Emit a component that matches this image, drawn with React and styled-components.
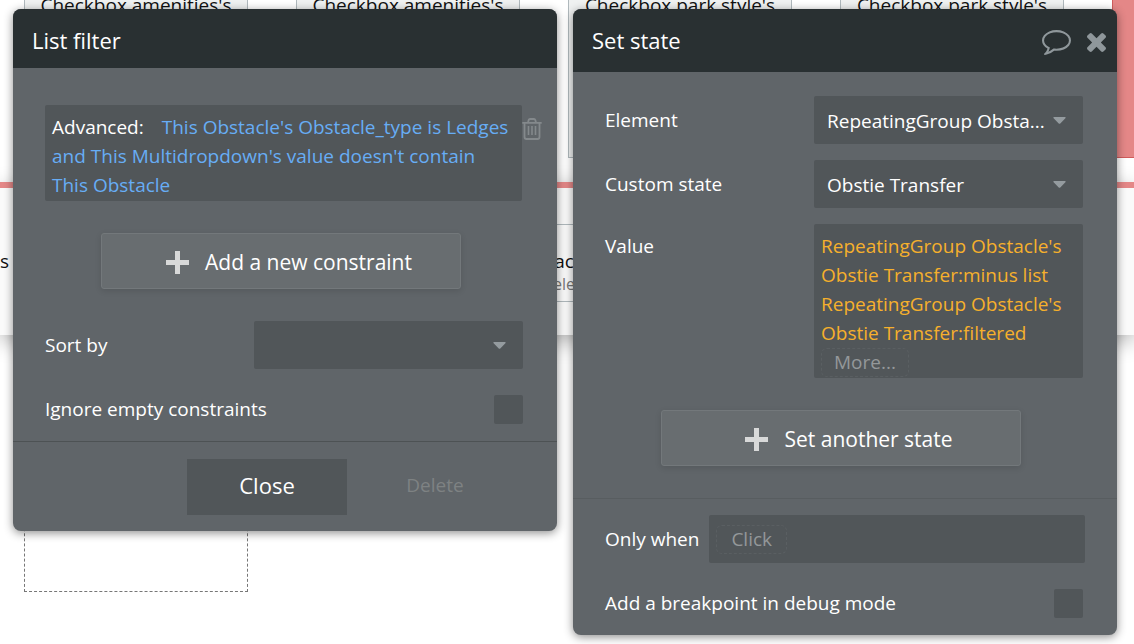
import React from 'react';

import styled, { createGlobalStyle } from 'styled-components';

const GlobalStyle = createGlobalStyle`
  * {
    box-sizing: border-box;
  }
  body {
    margin: 0;
    background-color: #fff;
    font-family: 'Open Sans', 'Noto Sans', sans-serif;
    font-size: 19px;
    line-height: 29px;
    color: #fff;
  }
  button, select, input {
    font: inherit;
    color: inherit;
    margin: 0;
  }
`;

const Page = styled.main`
  position: relative;
  min-height: 100vh;
  overflow: hidden;
`;

/* Workflow canvas behind the windows */
const Canvas = styled.div`
  position: absolute;
  inset: 0;
  overflow: hidden;
  color: #111;
`;

const StepRow = styled.div`
  display: flex;
  gap: 48px;
  height: 158px;
  padding-left: 24px;
`;

const Step = styled.div`
  flex: 0 0 224px;
  border: 1px solid ${(props) => (props.$active ? '#cf5c5c' : '#b0b9bd')};
  border-top: none;
  background-color: ${(props) => (props.$active ? '#e48787' : '#eff1f1')};
  text-align: center;
  line-height: 10px;
  white-space: nowrap;
`;

const EventStrip = styled.div`
  display: flex;
  align-items: flex-start;
  height: 153px;
  margin-top: 24px;
  padding-top: 36px;
  border-top: 6px solid #e48787;
  background-color: #fafafa;
  box-shadow: 0 6px 20px rgba(0, 0, 0, 0.3);
`;

const EventLabel = styled.span`
  flex: 0 0 452px;
  padding-top: 23px;
`;

const EventCard = styled.div`
  width: 224px;
  height: 78px;
  padding-top: 24px;
  border: 1px solid #b0b9bd;
  text-align: center;
  line-height: 24px;
  small {
    display: block;
    font-size: 16px;
    line-height: 22px;
    color: #777;
  }
`;

const DropZone = styled.div`
  width: 224px;
  height: 160px;
  margin: 97px 0 0 24px;
  border: 1px dashed #777;
`;

/* Floating property windows */
const Windows = styled.div`
  position: relative;
  display: flex;
  align-items: flex-start;
  gap: 16px;
  padding: 9px 17px 9px 13px;
`;

const Window = styled.section`
  flex: 1;
  min-width: 0;
  border-radius: 8px;
  background-color: #606569;
  box-shadow: 0 2px 10px rgba(0, 0, 0, 0.45);
  overflow: hidden;
`;

const WindowHeader = styled.header`
  display: flex;
  align-items: center;
  gap: 16px;
  padding: ${(props) => (props.$tall ? '17px 11px 17px 19px' : '17px 19px 13px')};
  background-color: #293032;
  h2 {
    flex: 1;
    margin: 0;
    font-size: 22px;
    font-weight: 400;
    line-height: 29px;
  }
  button {
    padding-top: 4px;
  }
`;

const IconButton = styled.button`
  display: flex;
  padding: 0;
  border: none;
  background: none;
  color: ${(props) => (props.$dim ? '#84898c' : '#8f979b')};
`;

const WindowBody = styled.div`
  display: flex;
  flex-direction: column;
  gap: 16px;
  padding: ${(props) => (props.$list ? '37px 34px 8px 32px' : '24px 34px 32px 32px')};
`;

const Row = styled.div`
  display: flex;
  align-items: ${(props) => (props.$top ? 'flex-start' : 'center')};
  justify-content: space-between;
  gap: 10px;
  min-height: 48px;
  label, h3 {
    margin: 0;
    padding-top: ${(props) => (props.$top ? '8px' : '0')};
    font-size: 19px;
    font-weight: 400;
    white-space: nowrap;
  }
`;

const SelectBox = styled.div`
  display: grid;
  width: 269px;
  align-items: center;
  > * {
    grid-area: 1 / 1;
  }
  svg {
    justify-self: end;
    margin-right: 17px;
    pointer-events: none;
  }
`;

const Select = styled.select`
  width: 100%;
  height: 48px;
  padding: 2px 34px 0 13px;
  border: none;
  border-radius: 2px;
  background-color: #515659;
  appearance: none;
`;

const Checkbox = styled.input`
  width: 29px;
  height: 29px;
  border-radius: 2px;
  background-color: #515659;
  appearance: none;
`;

const Constraint = styled.div`
  display: flex;
  align-items: flex-start;
  margin-right: -19px;
  margin-bottom: 16px;
  button {
    margin-top: 13px;
  }
`;

const Expression = styled.div`
  flex: ${(props) => (props.$value ? '0 0 269px' : '1')};
  padding: 8px 0 1px 7px;
  border-radius: 2px;
  background-color: #515659;
  color: ${(props) => (props.$value ? '#f6b02c' : '#67adf5')};
  white-space: nowrap;
`;

const Keyword = styled.span`
  margin-right: 18px;
  color: #fff;
`;

const Placeholder = styled.button`
  display: block;
  height: 29px;
  padding: 0 ${(props) => (props.$wide ? '14px' : '12px')};
  border: 1px dashed #5a5f62;
  border-radius: 6px;
  background: none;
  color: #94989a;
  line-height: 27px;
`;

const Condition = styled.div`
  flex: 1;
  height: 48px;
  padding: 10px 7px;
  border-radius: 2px;
  background-color: #515659;
`;

const AddButton = styled.button`
  display: flex;
  align-items: center;
  justify-content: center;
  gap: 16px;
  height: 56px;
  margin: ${(props) => (props.$last ? '16px 62px 0 56px' : '0 62px 16px 56px')};
  padding: 2px 0 0 16px;
  border: 1px solid #73787b;
  border-radius: 3px;
  background-color: #686d70;
  box-shadow: 0 2px 6px rgba(0, 0, 0, 0.12);
  font-size: 21px;
`;

const WindowFooter = styled.footer`
  display: flex;
  justify-content: flex-end;
  gap: 8px;
  padding: 17px 42px 16px;
  border-top: 1px solid #4d5254;
`;

const FooterButton = styled.button`
  width: 160px;
  height: 56px;
  padding: 0 0 3px;
  border: none;
  background-color: #515659;
  font-size: 22px;
  &:disabled {
    background: none;
    color: #7e8283;
    font-size: 19px;
  }
`;

const WindowOptions = styled.div`
  display: flex;
  flex-direction: column;
  gap: 16px;
  padding: 16px 32px 8px;
  border-top: 1px solid #585d60;
  input {
    margin-right: 2px;
  }
`;

const Caret = () => (
  <svg width="13" height="7" viewBox="0 0 13 7" aria-hidden="true">
    <path d="M1 0h11q1 0 .6.9L7.3 6.4q-.8.9-1.6 0L.4.9Q0 0 1 0z" fill="#949b9f" />
  </svg>
);

const Plus = () => (
  <svg width="23" height="23" viewBox="0 0 23 23" aria-hidden="true">
    <path d="M9 0h5v9h9v5h-9v9H9v-9H0V9h9z" fill="#d8d9d9" />
  </svg>
);

const Trash = () => (
  <svg width="20" height="22" viewBox="0 0 20 22" fill="none" stroke="currentColor" aria-hidden="true">
    <path d="M.3 4.8h19.4" strokeWidth="1.8" />
    <path d="M6 4.5l.7-2.6Q7 1 8 1h4q1 0 1.3 1L14 4.500" strokeWidth="1.8" />
    <path d="M2.5 5v14q0 2 2 2h11q2 0 2-2V5" strokeWidth="1.8" />
    <path d="M6.500 8v9M10 8v9M13.500 8v9" strokeWidth="1.6" />
  </svg>
);

const Comment = () => (
  <svg width="29" height="25" viewBox="0 256 1792 1536" fill="currentColor" aria-hidden="true">
    <path d="M896 384q-204 0-381.5 69.5t-282 187.5-104.5 255q0 112 71.5 213.5t201.5 175.5l87 50-27 96q-24 91-70 172 152-63 275-171l43-38 57 6q69 8 130 8 204 0 381.5-69.5t282-187.5 104.5-255-104.5-255-282-187.5-381.5-69.5zm896 512q0 174-120 321.5t-326 233-450 85.5q-70 0-145-8-198 175-460 242-49 14-114 22h-5q-15 0-27-10.5t-16-27.5v-1q-3-4-.5-12t2-10 4.5-9.5l6-9 7-8.5 8-9q7-8 31-34.5t34.5-38 31-39.5 32.5-51 27-59 26-76q-157-89-247.5-220t-90.5-281q0-174 120-321.5t326-233 450-85.5 450 85.5 326 233 120 321.5z" />
  </svg>
);

const Cross = () => (
  <svg width="19" height="19" viewBox="110 366 1188 1188" fill="currentColor" aria-hidden="true">
    <path d="M1298 1322q0 40-28 68l-136 136q-28 28-68 28t-68-28l-294-294-294 294q-28 28-68 28t-68-28l-136-136q-28-28-28-68t28-68l294-294-294-294q-28-28-28-68t28-68l136-136q28-28 68-28t68 28l294 294 294-294q28-28 68-28t68 28l136 136q28 28 28 68t-28 68l-294 294 294 294q28 28 28 68z" />
  </svg>
);

const ListFilter = () => {
  return (
    <Window>
      <WindowHeader>
        <h2>List filter</h2>
      </WindowHeader>
      <WindowBody $list>
        <Constraint>
          <Expression>
            <Keyword>Advanced:</Keyword>
            This Obstacle's Obstacle_type is Ledges
            <br />
            and This Multidropdown's value doesn't contain
            <br />
            This Obstacle
          </Expression>
          <IconButton $dim aria-label="Remove constraint">
            <Trash />
          </IconButton>
        </Constraint>
        <AddButton>
          <Plus />
          Add a new constraint
        </AddButton>
        <Row>
          <label htmlFor="sort">Sort by</label>
          <SelectBox>
            <Select id="sort" defaultValue="">
              <option value=""></option>
            </Select>
            <Caret />
          </SelectBox>
        </Row>
        <Row>
          <label htmlFor="ignore">Ignore empty constraints</label>
          <Checkbox id="ignore" type="checkbox" />
        </Row>
      </WindowBody>
      <WindowFooter>
        <FooterButton>Close</FooterButton>
        <FooterButton disabled>Delete</FooterButton>
      </WindowFooter>
    </Window>
  );
};

const SetState = () => {
  return (
    <Window>
      <WindowHeader $tall>
        <h2>Set state</h2>
        <IconButton aria-label="Comment">
          <Comment />
        </IconButton>
        <IconButton aria-label="Close window">
          <Cross />
        </IconButton>
      </WindowHeader>
      <WindowBody>
        <Row>
          <label htmlFor="element">Element</label>
          <SelectBox>
            <Select id="element">
              <option>RepeatingGroup Obsta...</option>
            </Select>
            <Caret />
          </SelectBox>
        </Row>
        <Row>
          <label htmlFor="state">Custom state</label>
          <SelectBox>
            <Select id="state">
              <option>Obstie Transfer</option>
            </Select>
            <Caret />
          </SelectBox>
        </Row>
        <Row $top>
          <h3>Value</h3>
          <Expression $value>
            RepeatingGroup Obstacle's
            <br />
            Obstie Transfer:minus list
            <br />
            RepeatingGroup Obstacle's
            <br />
            Obstie Transfer:filtered
            <Placeholder>More...</Placeholder>
          </Expression>
        </Row>
        <AddButton $last>
          <Plus />
          Set another state
        </AddButton>
      </WindowBody>
      <WindowOptions>
        <Row>
          <h3>Only when</h3>
          <Condition>
            <Placeholder $wide>Click</Placeholder>
          </Condition>
        </Row>
        <Row>
          <label htmlFor="breakpoint">Add a breakpoint in debug mode</label>
          <Checkbox id="breakpoint" type="checkbox" />
        </Row>
      </WindowOptions>
    </Window>
  );
};

const App = () => {
  return (
    <Page>
      <GlobalStyle />
      <Canvas>
        <StepRow>
          <Step>Checkbox amenities's</Step>
          <Step>Checkbox amenities's</Step>
          <Step>Checkbox park style's</Step>
          <Step>Checkbox park style's</Step>
          <Step $active />
        </StepRow>
        <EventStrip>
          <EventLabel>s</EventLabel>
          <EventCard>
            ac
            <small>ele</small>
          </EventCard>
        </EventStrip>
        <DropZone />
      </Canvas>
      <Windows>
        <ListFilter />
        <SetState />
      </Windows>
    </Page>
  );
};

export default App;
